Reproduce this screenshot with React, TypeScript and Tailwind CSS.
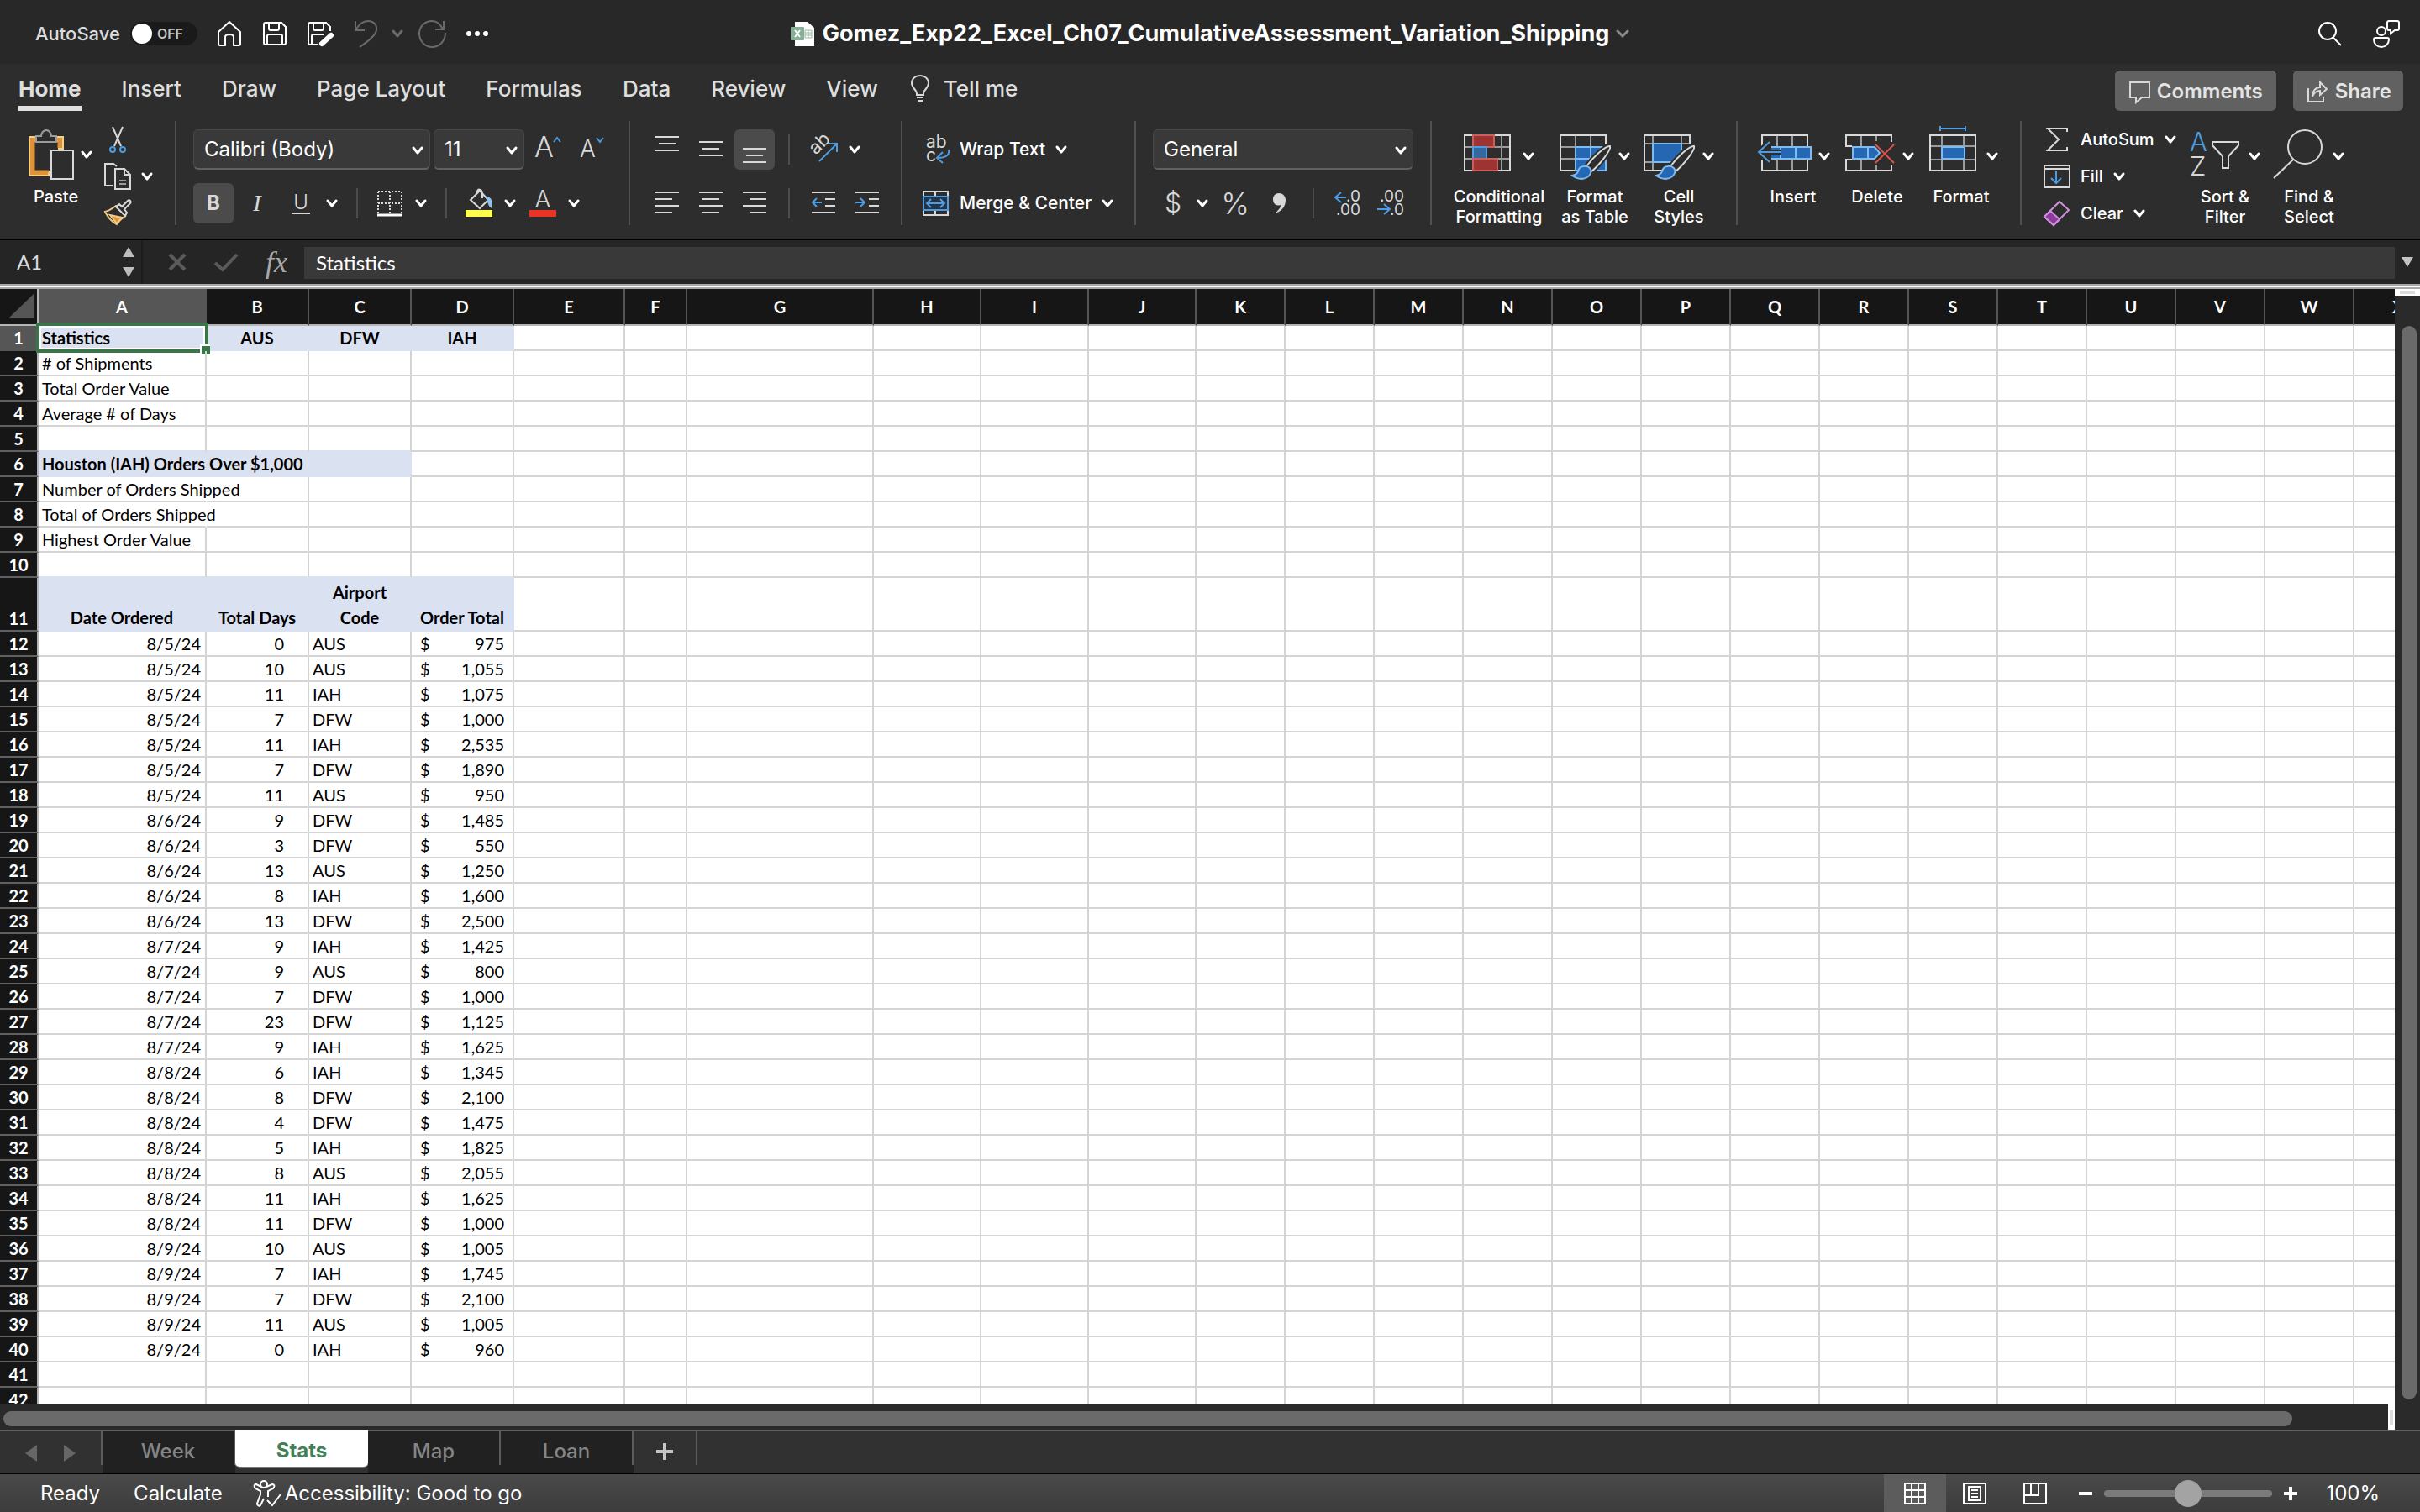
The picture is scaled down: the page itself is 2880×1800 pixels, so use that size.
import { useState } from 'react'
import type { ReactNode } from 'react'

const menuTabs = ['Home', 'Insert', 'Draw', 'Page Layout', 'Formulas', 'Data', 'Review', 'View']
const sheetTabs = ['Week', 'Stats', 'Map', 'Loan']

const rowHeaderWidth = 46

const columns = [
  { name: 'A', width: 200 },
  { name: 'B', width: 122 },
  { name: 'C', width: 122 },
  { name: 'D', width: 122 },
  { name: 'E', width: 132 },
  { name: 'F', width: 74 },
  { name: 'G', width: 222 },
  { name: 'H', width: 128 },
  { name: 'I', width: 128 },
  { name: 'J', width: 128 },
  ...'KLMNOPQRSTUVWX'.split('').map((name) => ({ name, width: 106 })),
]

const sheetWidth = columns.reduce((sum, c) => sum + c.width, rowHeaderWidth)

const orders: [string, number, string, string][] = [
  ['8/5/24', 0, 'AUS', '975'],
  ['8/5/24', 10, 'AUS', '1,055'],
  ['8/5/24', 11, 'IAH', '1,075'],
  ['8/5/24', 7, 'DFW', '1,000'],
  ['8/5/24', 11, 'IAH', '2,535'],
  ['8/5/24', 7, 'DFW', '1,890'],
  ['8/5/24', 11, 'AUS', '950'],
  ['8/6/24', 9, 'DFW', '1,485'],
  ['8/6/24', 3, 'DFW', '550'],
  ['8/6/24', 13, 'AUS', '1,250'],
  ['8/6/24', 8, 'IAH', '1,600'],
  ['8/6/24', 13, 'DFW', '2,500'],
  ['8/7/24', 9, 'IAH', '1,425'],
  ['8/7/24', 9, 'AUS', '800'],
  ['8/7/24', 7, 'DFW', '1,000'],
  ['8/7/24', 23, 'DFW', '1,125'],
  ['8/7/24', 9, 'IAH', '1,625'],
  ['8/8/24', 6, 'IAH', '1,345'],
  ['8/8/24', 8, 'DFW', '2,100'],
  ['8/8/24', 4, 'DFW', '1,475'],
  ['8/8/24', 5, 'IAH', '1,825'],
  ['8/8/24', 8, 'AUS', '2,055'],
  ['8/8/24', 11, 'IAH', '1,625'],
  ['8/8/24', 11, 'DFW', '1,000'],
  ['8/9/24', 10, 'AUS', '1,005'],
  ['8/9/24', 7, 'IAH', '1,745'],
  ['8/9/24', 7, 'DFW', '2,100'],
  ['8/9/24', 11, 'AUS', '1,005'],
  ['8/9/24', 0, 'IAH', '960'],
]

const labels: Record<number, string[]> = {
  1: ['Statistics', 'AUS', 'DFW', 'IAH'],
  2: ['# of Shipments'],
  3: ['Total Order Value'],
  4: ['Average # of Days'],
  6: ['Houston (IAH) Orders Over $1,000'],
  7: ['Number of Orders Shipped'],
  8: ['Total of Orders Shipped'],
  9: ['Highest Order Value'],
  11: ['Date Ordered', 'Total Days', 'Airport Code', 'Order Total'],
}

const rowCount = 42

function isFilled(row: number, col: number) {
  return ((row === 1 || row === 11) && col < 4) || (row === 6 && col < 3)
}

function Svg({ w, h, className = '', children }: { w: number; h: number; className?: string; children: ReactNode }) {
  return (
    <svg
      width={w}
      height={h}
      viewBox={`0 0 ${w} ${h}`}
      fill="none"
      stroke="#d8d8d8"
      strokeWidth={2}
      aria-hidden="true"
      className={`shrink-0 overflow-visible ${className}`}
    >
      {children}
    </svg>
  )
}

function Chevron({ className = '', color = '#ffffff' }: { className?: string; color?: string }) {
  return (
    <Svg w={14} h={10} className={className}>
      <path d="M2 2l5 6 5-6" stroke={color} strokeWidth={3} strokeLinecap="round" strokeLinejoin="round" />
    </Svg>
  )
}

function Lines({ rows }: { rows: [number, number, number][] }) {
  return (
    <Svg w={28} h={48}>
      {rows.map(([x1, x2, y]) => (
        <path key={y} d={`M${x1} ${y}H${x2}`} />
      ))}
    </Svg>
  )
}

function Tool({ label, active, children }: { label: string; active?: boolean; children: ReactNode }) {
  return (
    <button
      type="button"
      aria-label={label}
      className={`flex size-12 shrink-0 items-center justify-center rounded-md text-[#d8d8d8] ${active ? 'bg-[#4b4b4b]' : ''}`}
    >
      {children}
    </button>
  )
}

function Sep() {
  return <div className="h-9 w-0.5 shrink-0 bg-[#4c4c4c]" />
}

function Divider() {
  return <div className="w-0.5 shrink-0 self-stretch bg-[#505050]" />
}

function Dropdown({ label, value, className }: { label: string; value: string; className: string }) {
  return (
    <div className={`relative h-12 shrink-0 ${className}`}>
      <select
        aria-label={label}
        className="h-full w-full appearance-none rounded-md border border-b-2 border-[#484848] border-b-[#606060] bg-[#393939] pl-3 text-2xl text-white"
      >
        <option>{value}</option>
      </select>
      <Chevron className="pointer-events-none absolute top-5 right-2" />
    </div>
  )
}

function BigButton({ lines, icon, className = 'w-[100px]' }: { lines: string[]; icon: ReactNode; className?: string }) {
  return (
    <button type="button" className={`flex shrink-0 flex-col items-center gap-2 pt-2.5 ${className}`}>
      <span className="flex h-[60px] items-center gap-2.5">
        {icon}
        <Chevron className="mt-1" />
      </span>
      <span className="text-xl leading-6 font-medium text-white">
        {lines.map((line) => (
          <span key={line} className="block whitespace-nowrap">{line}</span>
        ))}
      </span>
    </button>
  )
}

function SmallButton({ label, icon }: { label: string; icon: ReactNode }) {
  return (
    <button type="button" className="flex h-8 items-center gap-3 text-xl font-medium whitespace-nowrap text-white">
      {icon}
      {label}
      <Chevron />
    </button>
  )
}

function PaintBrush() {
  return (
    <>
      <path d="M60 14C62 18 47 37 38 44L32 38C40 27 55 13 60 14Z" fill="#2d2d2d" stroke="#2d2d2d" strokeWidth={6} />
      <path d="M60 14C62 18 47 37 38 44L32 38C40 27 55 13 60 14Z" fill="#2d2d2d" />
      <path d="M29 38C35 37 39 42 37 46C34 54 23 55 15 49C19 48 21 47 22 44C23 40 26 38 29 38Z" fill="#2667b3" stroke="#7fbaf0" />
    </>
  )
}

function TitleBar() {
  const [autoSave, setAutoSave] = useState(false)

  return (
    <header className="grid h-[76px] shrink-0 grid-cols-[1fr_auto_1fr] items-center bg-[#282828] pt-1">
      <div className="flex items-center pl-[42px]">
        <label className="flex items-center gap-3 text-[22px] font-medium text-[#dcdcdc]">
          AutoSave
          <input
            type="checkbox"
            role="switch"
            checked={autoSave}
            onChange={(e) => setAutoSave(e.target.checked)}
            className="peer sr-only"
          />
          <span className="flex h-7 w-20 items-center gap-1.5 rounded-full bg-[#1a1a1a] pl-0.5 text-base font-semibold text-[#c4c4c4]">
            <span className="size-6 rounded-full bg-white" />
            {autoSave ? 'ON' : 'OFF'}
          </span>
        </label>
        <div className="ml-[22px] flex items-center gap-[22px]">
          <button type="button" aria-label="Home">
            <Svg w={32} h={32}>
              <path d="M3 14L16 2L29 14V28C29 29 28 30 27 30H21V20C21 18 19 17 16 17C13 17 11 18 11 20V30H5C4 30 3 29 3 28Z" stroke="#fff" strokeLinejoin="round" />
            </Svg>
          </button>
          <button type="button" aria-label="Save">
            <Svg w={32} h={32}>
              <path d="M5 3H24L29 8V27C29 28 28 29 27 29H5C4 29 3 28 3 27V5C3 4 4 3 5 3ZM9 3V10C9 11 10 12 11 12H19C20 12 21 11 21 10V3M7 29V19C7 18 8 17 9 17H23C24 17 25 18 25 19V29" stroke="#fff" />
            </Svg>
          </button>
          <button type="button" aria-label="Save As">
            <Svg w={32} h={32}>
              <path d="M14 29H4C3 29 2 28 2 27V5C2 4 3 3 4 3H23L28 8V13M8 3V10C8 11 9 12 10 12H18C19 12 20 11 20 10V3M6 29V19C6 18 7 17 8 17H20" stroke="#fff" />
              <path d="M29 18L18 28" stroke="#fff" strokeWidth={6} strokeLinecap="round" />
            </Svg>
          </button>
          <span className="flex items-center gap-[15px]">
            <button type="button" aria-label="Undo">
              <Svg w={32} h={32}>
                <path d="M4 1V12H15M4 12C8 5 13 1 19 1C26 1 30 6 29 12C28 18 18 26 9 32" stroke="#6a6a6a" />
              </Svg>
            </button>
            <Chevron color="#6a6a6a" />
          </span>
          <button type="button" aria-label="Redo" className="-ml-1">
            <Svg w={32} h={32}>
              <path d="M30 1V11H20M29 11C26 4 21 1 16 1C7 1 1 8 1 16C1 25 8 32 16 32C25 32 32 25 32 15" stroke="#6a6a6a" />
            </Svg>
          </button>
          <button type="button" aria-label="More commands">
            <Svg w={32} h={32}>
              <g fill="#fff" stroke="none">
                <circle cx={6} cy={16} r={3} />
                <circle cx={16} cy={16} r={3} />
                <circle cx={26} cy={16} r={3} />
              </g>
            </Svg>
          </button>
        </div>
      </div>
      <button type="button" className="flex items-center gap-2 text-[27px] font-bold whitespace-nowrap text-white">
        <Svg w={30} h={30}>
          <path d="M5 1H20L28 8V30H5Z" fill="#fff" stroke="none" />
          <path d="M17 11H25V20H17ZM21 11V20M17 14H25M17 17H25" stroke="#9db8a4" strokeWidth={1} />
          <rect x={0} y={7} width={16} height={16} rx={1} fill="#88b096" stroke="none" />
          <path d="M5 11L11 19M11 11L5 19" stroke="#fff" />
        </Svg>
        Gomez_Exp22_Excel_Ch07_CumulativeAssessment_Variation_Shipping
        <Svg w={16} h={10}>
          <path d="M2 2l6 6 6-6" stroke="#8a8a8a" strokeWidth={3} strokeLinecap="round" />
        </Svg>
      </button>
      <div className="flex items-center justify-end gap-9 pr-6">
        <button type="button" aria-label="Search">
          <Svg w={30} h={32}>
            <circle cx={12} cy={13} r={10} stroke="#fff" />
            <path d="M19 21L28 30" stroke="#fff" />
          </Svg>
        </button>
        <button type="button" aria-label="Presence">
          <Svg w={32} h={32}>
            <circle cx={10} cy={13} r={5} stroke="#fff" />
            <path d="M3 21H17C18 21 19 22 19 23C19 28 15 32 10 32C5 32 1 28 1 23C1 22 2 21 3 21Z" stroke="#fff" />
            <path d="M19 1H29C30 1 31 2 31 3V10C31 11 30 12 29 12H26L21 16V12H19C18 12 17 11 17 10V3C17 2 18 1 19 1Z" stroke="#fff" />
          </Svg>
        </button>
      </div>
    </header>
  )
}

function MenuTabs() {
  return (
    <nav className="flex h-16 shrink-0 items-start justify-between pt-2 pr-5 pl-[22px]">
      <div className="flex gap-12 text-[26px] font-medium text-[#dedede]">
        {menuTabs.map((tab) => (
          <button
            key={tab}
            type="button"
            className={`flex h-12 items-center border-b-[6px] whitespace-nowrap ${tab === 'Home' ? 'border-[#e0e0e0] font-bold' : 'border-transparent'}`}
          >
            {tab}
          </button>
        ))}
        <button type="button" className="-ml-2.5 flex h-12 items-center gap-4 border-b-[6px] border-transparent whitespace-nowrap">
          <Svg w={24} h={32}>
            <path d="M8 24V22C8 18 2 16 2 10C2 5 6 1 12 1C18 1 22 5 22 10C22 16 16 18 16 22V24ZM8 27H16M9 31H15" />
          </Svg>
          Tell me
        </button>
      </div>
      <div className="flex gap-5 text-2xl font-semibold text-[#e4e4e4]">
        <button type="button" className="flex h-12 items-center gap-2 rounded-md border-t border-[#757575] bg-[#616161] px-4">
          <Svg w={26} h={26}>
            <path d="M2 2H25V20H16L9 26V20H2Z" />
          </Svg>
          Comments
        </button>
        <button type="button" className="flex h-12 items-center gap-2 rounded-md border-t border-[#757575] bg-[#616161] px-3.5">
          <Svg w={28} h={26}>
            <path d="M4 9V25H22V19M9 19C9 12 13 8 18 8V2L26 10L18 17V12C14 12 11 14 9 19Z" />
          </Svg>
          Share
        </button>
      </div>
    </nav>
  )
}

function Ribbon() {
  return (
    <div className="flex h-36 shrink-0 pt-1 pb-4">
      {/* Clipboard */}
      <div className="flex w-52 shrink-0 gap-3.5 pl-[34px]">
        <button type="button" className="flex flex-col gap-2 pt-2.5">
          <span className="flex items-center gap-2">
            <Svg w={54} h={60}>
              <path d="M1 9H41V23H36V14H6V50H24V55H1Z" fill="#dd933a" stroke="#f5d28c" />
              <path d="M36 12V22M6 12V50H24" stroke="#dd933a" strokeWidth={3} />
              <path d="M9 15V8H15C15 4 18 1 21 1C24 1 27 4 27 8H33V15Z" fill="#2d2d2d" stroke="#9b9b9b" />
              <rect x={27} y={25} width={26} height={34} fill="#2d2d2d" />
            </Svg>
            <Chevron />
          </span>
          <span className="pl-1.5 text-left text-xl leading-6 font-medium text-white">Paste</span>
        </button>
        <div className="flex flex-col gap-3 pt-1.5">
          <button type="button" aria-label="Cut" className="size-8">
            <Svg w={32} h={32}>
              <path d="M10 1L20 24M22 1L12 24" />
              <circle cx={10} cy={28} r={3} stroke="#4f9ce0" />
              <circle cx={22} cy={28} r={3} stroke="#4f9ce0" />
            </Svg>
          </button>
          <button type="button" aria-label="Copy" className="flex items-center gap-3">
            <Svg w={32} h={32}>
              <path d="M10 27H1V1H11L15 4M13 7H24L31 14V31H13ZM24 7V14H31" />
              <path d="M18 21H26M18 25H26" stroke="#9b9b9b" />
            </Svg>
            <Chevron />
          </button>
          <button type="button" aria-label="Format Painter" className="size-8">
            <Svg w={32} h={32}>
              <path d="M1 14C6 13 10 10 14 7L25 19C21 22 17 26 15 29C9 26 4 20 1 14Z" stroke="#f0cb84" />
              <path d="M7 18L21 21L15 28Z" fill="#dd933a" stroke="#f0cb84" />
              <path d="M14 8L18 5L21 8L28 1C30 -1 33 2 31 4L24 11L27 15L25 19Z" fill="#2d2d2d" />
            </Svg>
          </button>
        </div>
      </div>
      <Divider />

      {/* Font */}
      <div className="flex w-[538px] shrink-0 flex-col gap-4 pt-2.5 pl-5">
        <div className="flex items-center">
          <Dropdown label="Font" value="Calibri (Body)" className="mr-1 w-[282px]" />
          <Dropdown label="Font size" value="11" className="mr-1 w-[108px]" />
          <Tool label="Increase font size">
            <Svg w={36} h={32}>
              <text x={2} y={25} fontSize={34} fontWeight={300} fill="#d8d8d8" stroke="none">A</text>
              <path d="M25 7L29 2L33 7" stroke="#4f9ce0" />
            </Svg>
          </Tool>
          <Tool label="Decrease font size">
            <Svg w={36} h={32}>
              <text x={8} y={25} fontSize={28} fontWeight={300} fill="#d8d8d8" stroke="none">A</text>
              <path d="M28 2L32 7L36 2" stroke="#4f9ce0" />
            </Svg>
          </Tool>
        </div>
        <div className="flex items-center">
          <div className="mr-1.5 flex gap-1 text-[28px]">
            <Tool label="Bold" active><b className="text-2xl font-bold">B</b></Tool>
            <Tool label="Italic"><i className="font-['Liberation_Serif',serif]">I</i></Tool>
            <Tool label="Underline"><span className="border-b-2 border-[#d8d8d8] px-0.5 text-2xl leading-6 font-light">U</span></Tool>
          </div>
          <Chevron className="mr-[22px]" />
          <Sep />
          <button type="button" aria-label="Borders" className="mx-[22px] flex items-center gap-3.5">
            <Svg w={32} h={32}>
              <path d="M2 2H30M2 16H30M2 2V28M16 2V28M30 2V28" strokeDasharray="2 2" />
              <path d="M1 30H31" stroke="#fff" strokeWidth={3} />
            </Svg>
            <Chevron />
          </button>
          <Sep />
          <button type="button" aria-label="Fill colour" className="ml-[22px] flex items-center gap-3.5">
            <Svg w={32} h={32}>
              <path d="M6 12L17 1L27 12L17 22ZM14 4C13 -2 20 -2 20 5V10" />
              <path d="M25 9C31 10 31 14 30 20C27 18 28 14 25 9Z" fill="#8fc3ee" stroke="#8fc3ee" />
              <rect x={0} y={24} width={32} height={8} fill="#ffff4d" stroke="none" />
            </Svg>
            <Chevron />
          </button>
          <button type="button" aria-label="Font colour" className="ml-4 flex items-center gap-3.5">
            <Svg w={32} h={32}>
              <text x={16} y={21} textAnchor="middle" fontSize={28} fontWeight={300} fill="#d8d8d8" stroke="none">A</text>
              <rect x={0} y={24} width={32} height={8} fill="#e93323" stroke="none" />
            </Svg>
            <Chevron />
          </button>
        </div>
      </div>
      <Divider />

      {/* Alignment */}
      <div className="flex w-[322px] shrink-0 flex-col gap-4 pt-2.5 pl-5">
        <div className="flex items-center">
          <div className="mr-4 flex gap-1">
            <Tool label="Top align"><Lines rows={[[0, 28, 9], [4, 24, 17], [0, 28, 25]]} /></Tool>
            <Tool label="Middle align"><Lines rows={[[0, 28, 15], [4, 24, 23], [0, 28, 31]]} /></Tool>
            <Tool label="Bottom align" active><Lines rows={[[0, 28, 23], [4, 24, 31], [0, 28, 39]]} /></Tool>
          </div>
          <Sep />
          <div className="ml-4 flex items-center gap-1.5">
            <Tool label="Orientation">
              <Svg w={32} h={32}>
                <text x={0} y={0} transform="translate(7 23) rotate(-45)" fontSize={22} fill="#d8d8d8" stroke="none">ab</text>
                <path d="M11 30L31 10M22 9H32V19" stroke="#4f9ce0" />
              </Svg>
            </Tool>
            <Chevron />
          </div>
        </div>
        <div className="flex items-center">
          <div className="mr-4 flex gap-1">
            <Tool label="Align left"><Lines rows={[[0, 28, 11], [0, 20, 19], [0, 28, 27], [0, 20, 35]]} /></Tool>
            <Tool label="Centre"><Lines rows={[[0, 28, 11], [4, 24, 19], [0, 28, 27], [4, 24, 35]]} /></Tool>
            <Tool label="Align right"><Lines rows={[[0, 28, 11], [8, 28, 19], [0, 28, 27], [8, 28, 35]]} /></Tool>
          </div>
          <Sep />
          <div className="ml-4 flex gap-1">
            <Tool label="Decrease indent">
              <Svg w={28} h={48}>
                <path d="M0 11H28M16 19H28M16 27H28M0 35H28" />
                <path d="M12 23H1M6 18L1 23L6 28" stroke="#4f9ce0" />
              </Svg>
            </Tool>
            <Tool label="Increase indent">
              <Svg w={28} h={48}>
                <path d="M0 11H28M16 19H28M16 27H28M0 35H28" />
                <path d="M0 23H11M6 18L11 23L6 28" stroke="#4f9ce0" />
              </Svg>
            </Tool>
          </div>
        </div>
      </div>
      <Divider />

      <div className="flex w-[276px] shrink-0 flex-col gap-4 pt-2.5 pl-6 text-[21px] font-medium text-white">
        <button type="button" className="flex h-12 items-center gap-3 whitespace-nowrap">
          <Svg w={32} h={32}>
            <text fontSize={21} fontWeight={400} fill="#d8d8d8" stroke="none">
              <tspan x={4} y={14}>ab</tspan>
              <tspan x={4} y={30}>c</tspan>
            </text>
            <path d="M31 16C32 22 29 26 17 26M24 19L17 26L24 32" stroke="#4f9ce0" />
          </Svg>
          Wrap Text
          <Chevron />
        </button>
        <button type="button" className="flex h-12 items-center gap-3 whitespace-nowrap">
          <Svg w={32} h={32}>
            <path d="M1 2H30V30H1ZM15 2V8M15 24V30" />
            <rect x={1} y={8} width={29} height={16} fill="#243447" stroke="#4f9ce0" />
            <path d="M6 16H25M10 11L5 16L10 21M21 11L26 16L21 21" stroke="#4f9ce0" />
          </Svg>
          Merge &amp; Center
          <Chevron />
        </button>
      </div>
      <Divider />

      {/* Number */}
      <div className="flex w-[350px] shrink-0 flex-col gap-4 pt-2.5 pl-5">
        <Dropdown label="Number format" value="General" className="w-[310px]" />
        <div className="flex items-center text-4xl font-light">
          <Tool label="Accounting format"><span className="text-[32px]">$</span></Tool>
          <Chevron className="mr-2 ml-1" />
          <div className="mr-4 flex gap-1">
            <Tool label="Percent style">%</Tool>
            <Tool label="Comma style">
              <Svg w={20} h={32}>
                <path d="M10 4C15 4 18 8 18 12C18 20 13 26 5 28C10 24 12 21 12 18C6 20 3 16 3 11C3 7 6 4 10 4Z" fill="#d8d8d8" stroke="none" />
              </Svg>
            </Tool>
          </div>
          <Sep />
          <div className="ml-4 flex gap-1">
            <Tool label="Increase decimal">
              <Svg w={32} h={32}>
                <text textAnchor="end" fontSize={19} fontWeight={400} fill="#d8d8d8" stroke="none">
                  <tspan x={31} y={14}>.0</tspan>
                  <tspan x={31} y={30}>.00</tspan>
                </text>
                <path d="M14 9H1M8 3L1 9L8 15" stroke="#4f9ce0" />
              </Svg>
            </Tool>
            <Tool label="Decrease decimal">
              <Svg w={32} h={32}>
                <text textAnchor="end" fontSize={19} fontWeight={400} fill="#d8d8d8" stroke="none">
                  <tspan x={31} y={14}>.00</tspan>
                  <tspan x={31} y={30}>.0</tspan>
                </text>
                <path d="M-1 23H13M7 17L14 23L7 29" stroke="#4f9ce0" />
              </Svg>
            </Tool>
          </div>
        </div>
      </div>
      <Divider />

      {/* Styles */}
      <div className="flex w-[362px] shrink-0 items-start pl-6">
        <BigButton
          lines={['Conditional', 'Formatting']}
          className="mr-2 w-28"
          icon={
            <Svg w={60} h={48}>
              <path d="M1 15H55M1 29H55M11 1V43M45 1V43" stroke="#9b9b9b" />
              <rect x={1} y={1} width={54} height={42} />
              <rect x={11} y={1} width={25} height={14} fill="#9c3431" stroke="#c9605c" />
              <rect x={11} y={15} width={16} height={14} fill="#35689c" stroke="#4f9ce0" />
              <rect x={11} y={29} width={29} height={14} fill="#9c3431" stroke="#c9605c" />
            </Svg>
          }
        />
        <BigButton
          lines={['Format', 'as Table']}
          icon={
            <Svg w={60} h={48}>
              <path d="M1 15H55M1 29H19M19 1V43M37 1V15" stroke="#9b9b9b" />
              <path d="M55 12V1H1V43H19" />
              <path d="M19 15H55V43H19ZM19 29H55M37 15V43" fill="#2667b3" stroke="#7fbaf0" />
              <PaintBrush />
            </Svg>
          }
        />
        <BigButton
          lines={['Cell', 'Styles']}
          icon={
            <Svg w={60} h={48}>
              <path d="M1 11H55M1 33H30M11 1V43M45 1V11" stroke="#9b9b9b" />
              <path d="M55 12V1H1V43H22" />
              <rect x={11} y={11} width={34} height={22} fill="#2667b3" stroke="#7fbaf0" />
              <PaintBrush />
            </Svg>
          }
        />
      </div>
      <Divider />

      {/* Cells */}
      <div className="flex w-[336px] shrink-0 items-start pl-4">
        <BigButton
          lines={['Insert']}
          icon={
            <Svg w={64} h={60}>
              <path d="M25 7V20M43 7V20M25 36V49M43 36V49" stroke="#9b9b9b" />
              <path d="M7 20V7H61V20M7 36V49H61V36" />
              <path d="M18 21H65V35H18" fill="#2667b3" stroke="#7fbaf0" />
              <path d="M29 21V35M47 21V35" stroke="#7fbaf0" />
              <path d="M16 14L3 27L16 40M3 27H29" stroke="#2d2d2d" strokeWidth={6} />
              <path d="M16 15L3 27L16 39M3 27H29" stroke="#4f9ce0" />
            </Svg>
          }
        />
        <BigButton
          lines={['Delete']}
          icon={
            <Svg w={64} h={60}>
              <path d="M25 7V20M43 7V14M25 36V49M43 42V49" stroke="#9b9b9b" />
              <path d="M14 20H7V7H61V15M14 36H7V49H61V42" />
              <path d="M15 21H41L47 28L41 35H15Z" fill="#2667b3" stroke="#7fbaf0" />
              <path d="M33 21V35" stroke="#7fbaf0" />
              <path d="M42 18L64 40M64 18L42 40" stroke="#d9534c" />
            </Svg>
          }
        />
        <BigButton
          lines={['Format']}
          icon={
            <Svg w={64} h={60}>
              <path d="M7 20H61M7 36H61M21 7V49M47 7V49" stroke="#9b9b9b" />
              <rect x={7} y={7} width={54} height={42} />
              <rect x={21} y={21} width={27} height={14} fill="#2667b3" stroke="#7fbaf0" />
              <path d="M19 -1H49M19 -4V2M49 -4V2" stroke="#4f9ce0" />
            </Svg>
          }
        />
      </div>
      <Divider />

      {/* Editing */}
      <div className="flex shrink-0 items-start pl-[26px]">
        <div className="flex w-[166px] flex-col gap-3 pt-1.5">
          <SmallButton
            label="AutoSum"
            icon={
              <Svg w={32} h={32}>
                <path d="M28 7V3H5L18 16L5 29H28V25" />
              </Svg>
            }
          />
          <SmallButton
            label="Fill"
            icon={
              <Svg w={32} h={32}>
                <path d="M1 3H31V29H1ZM1 7H31" />
                <path d="M15 10V24M9 18L15 24L21 18" stroke="#4f9ce0" />
              </Svg>
            }
          />
          <SmallButton
            label="Clear"
            icon={
              <Svg w={32} h={32}>
                <path d="M19 2L30 12L12 30L1 20Z" stroke="#cf8fdc" />
                <path d="M8 13L19 23L12 30L1 20Z" fill="#8b3a9e" stroke="#cf8fdc" />
              </Svg>
            }
          />
        </div>
        <BigButton
          lines={['Sort &', 'Filter']}
          icon={
            <Svg w={60} h={60}>
              <text fontSize={31} fontWeight={300} stroke="none">
                <tspan x={0} y={26} fill="#4f9ce0">A</tspan>
                <tspan x={0} y={55} fill="#d8d8d8">Z</tspan>
              </text>
              <path d="M27 15H58V19L46 32V46H39V32L27 19Z" />
            </Svg>
          }
        />
        <BigButton
          lines={['Find &', 'Select']}
          icon={
            <Svg w={60} h={60}>
              <circle cx={37} cy={21} r={20} />
              <path d="M23 36L0 58" />
            </Svg>
          }
        />
      </div>
    </div>
  )
}

function FormulaBar() {
  return (
    <div className="flex h-[54px] shrink-0 items-stretch border-t-2 border-black bg-[#252525] text-[#dcdcdc]">
      <div className="flex w-[170px] items-center justify-between border-r-2 border-[#1c1c1c] pr-2 pl-5">
        <input
          aria-label="Name box"
          defaultValue="A1"
          className="w-24 bg-transparent font-['Lato',sans-serif] text-2xl outline-none"
        />
        <Svg w={14} h={36}>
          <path d="M0 12L7 0L14 12ZM0 24L7 36L14 24Z" fill="#bdbdbd" stroke="none" />
        </Svg>
      </div>
      <div className="flex w-48 items-center pl-[30px]">
        <button type="button" aria-label="Cancel">
          <Svg w={22} h={22}>
            <path d="M2 2L20 20M20 2L2 20" stroke="#5a5a5a" strokeWidth={4} />
          </Svg>
        </button>
        <button type="button" aria-label="Enter" className="ml-8">
          <Svg w={30} h={22}>
            <path d="M2 12L11 20L28 2" stroke="#5a5a5a" strokeWidth={4} />
          </Svg>
        </button>
        <button type="button" aria-label="Insert function" className="ml-8 font-['Liberation_Serif',serif] text-4xl leading-none text-[#a8a8a8] italic">
          fx
        </button>
      </div>
      <input
        aria-label="Formula"
        defaultValue="Statistics"
        className="my-2 mb-1.5 min-w-0 flex-1 bg-[#393939] px-3.5 font-['Lato',sans-serif] text-2xl text-white outline-none"
      />
      <button type="button" aria-label="Expand formula bar" className="flex w-[30px] items-center justify-center">
        <Svg w={14} h={12}>
          <path d="M0 0H14L7 12Z" fill="#c4c4c4" stroke="none" />
        </Svg>
      </button>
    </div>
  )
}

function cellContent(row: number, col: number): ReactNode {
  if (labels[row]) return labels[row][col]
  const order = orders[row - 12]
  if (!order || col > 3) return null
  if (col === 3) {
    return (
      <span className="flex justify-between">
        <span>$</span>
        <span>{order[3]}</span>
      </span>
    )
  }
  return order[col]
}

function cellAlign(row: number, col: number) {
  if (row === 11) return 'text-center'
  if (row === 1 && col > 0) return 'text-center'
  if (row > 11 && col === 0) return 'text-right pr-[5px]'
  if (row > 11 && col === 1) return 'text-right pr-7'
  if (row > 11 && col === 3) return 'pl-2.5 pr-2.5'
  return 'pl-1'
}

function Cell({ row, col }: { row: number; col: number }) {
  const filled = isFilled(row, col)
  const spills = col === 0 && (row === 7 || row === 8)
  const right = filled ? 'border-r-[#dae1f1]' : spills ? 'border-r-transparent' : 'border-r-[#d4d4d4]'
  const bottom = filled || isFilled(row + 1, col) ? 'border-b-[#dae1f1]' : 'border-b-[#d4d4d4]'
  const wraps = row === 11 && col === 2

  return (
    <td
      className={`border-r-2 border-b-2 align-bottom ${col === 0 ? 'relative z-10' : ''} ${right} ${bottom} ${filled ? 'bg-[#dae1f1] font-bold' : ''} ${cellAlign(row, col)} ${wraps ? 'px-5' : 'whitespace-nowrap'} ${row === 11 ? 'leading-[30px]' : 'leading-7'}`}
    >
      {cellContent(row, col)}
      {row === 1 && col === 0 && (
        <span className="absolute -top-1 -right-1 -bottom-1 -left-[3px] border-4 border-[#3a7549]">
          <span className="absolute inset-0 border-2 border-white" />
          <span className="absolute -right-1.5 -bottom-1.5 size-3 border-t-2 border-l-2 border-white bg-[#3a7549]" />
        </span>
      )}
    </td>
  )
}

function Sheet() {
  return (
    <div className="flex min-h-0 flex-1">
      <div className="flex min-w-0 flex-1 flex-col">
        <div className="isolate min-h-0 flex-1 overflow-hidden bg-white">
          <table
            style={{ width: sheetWidth }}
            className="table-fixed border-separate border-spacing-0 font-['Lato',sans-serif] text-[20px] text-black"
          >
            <colgroup>
              <col style={{ width: rowHeaderWidth }} />
              {columns.map((c) => (
                <col key={c.name} style={{ width: c.width }} />
              ))}
            </colgroup>
            <thead>
              <tr className="h-11 bg-[#161616] text-white">
                <th aria-label="Select all" className="border-r-2 border-b-2 border-[#b5b5b5] p-0">
                  <Svg w={32} h={32} className="ml-2.5">
                    <path d="M30 1V30H0Z" fill="#555" stroke="none" />
                  </Svg>
                </th>
                {columns.map((c) => (
                  <th
                    key={c.name}
                    scope="col"
                    className={`border-r-2 border-b-2 border-b-[#b5b5b5] p-0 font-bold ${c.name === 'A' ? 'border-r-[#565656] bg-[#565656]' : 'border-r-[#555]'}`}
                  >
                    {c.name}
                  </th>
                ))}
              </tr>
            </thead>
            <tbody>
              {Array.from({ length: rowCount }, (_, i) => i + 1).map((row) => (
                <tr key={row} className={row === 11 ? 'h-16' : 'h-[30px]'}>
                  <th
                    scope="row"
                    className={`border-r-2 border-b-2 border-r-[#b5b5b5] p-0 align-bottom leading-7 font-bold text-white ${row === 1 ? 'border-b-[#565656] bg-[#565656]' : 'border-b-[#606060] bg-[#161616]'}`}
                  >
                    {row}
                  </th>
                  {columns.map((c, col) => (
                    <Cell key={c.name} row={row} col={col} />
                  ))}
                </tr>
              ))}
            </tbody>
          </table>
        </div>
        <div className="flex h-[30px] shrink-0 bg-[#2a2a2a]">
          <div className="flex flex-1 items-center pt-1 pl-1">
            <div className="h-[18px] w-[96%] rounded-full bg-[#6a6a6a]" />
          </div>
          <div className="flex w-2 items-center justify-center bg-white">
            <div className="h-[18px] w-1 bg-[#dcdcdc]" />
          </div>
        </div>
      </div>
      <div className="flex w-[30px] shrink-0 flex-col items-center bg-[#2a2a2a] pb-9">
        <div className="flex h-2 w-full items-center justify-center bg-white">
          <div className="h-1 w-[18px] bg-[#dcdcdc]" />
        </div>
        <div className="mt-9 ml-1 w-[18px] flex-1 rounded-full bg-[#6a6a6a]" />
      </div>
    </div>
  )
}

function SheetTabs() {
  const [active, setActive] = useState('Stats')

  return (
    <div className="flex h-[52px] shrink-0 items-start border-t-2 border-[#606060] bg-[#313131] text-2xl font-medium">
      <div className="flex h-10 w-[122px] items-end gap-8 border-r-2 border-[#5c5c5c] pb-1 pl-[30px]">
        <Svg w={14} h={20}>
          <path d="M14 0V20L0 10Z" fill="#666" stroke="none" />
        </Svg>
        <Svg w={14} h={20}>
          <path d="M0 0V20L14 10Z" fill="#666" stroke="none" />
        </Svg>
      </div>
      {sheetTabs.map((tab) => (
        <div key={tab} className={`h-full w-[158px] ${tab === active ? '' : 'bg-[#212121]'}`}>
          <button
            type="button"
            onClick={() => setActive(tab)}
            className={
              tab === active
                ? '-mt-0.5 h-[46px] w-full rounded-b-md border-b-2 border-[#777] bg-white pt-1.5 font-bold text-[#3f8055]'
                : 'h-10 w-full border-r-2 border-[#5c5c5c] pt-2 text-[#858585]'
            }
          >
            {tab}
          </button>
        </div>
      ))}
      <button type="button" aria-label="New sheet" className="flex h-10 w-[76px] items-center justify-center border-r-2 border-[#5c5c5c] pt-2">
        <Svg w={20} h={20}>
          <path d="M10 0V20M0 10H20" stroke="#c4c4c4" strokeWidth={4} />
        </Svg>
      </button>
    </div>
  )
}

function StatusBar() {
  return (
    <footer className="flex h-[46px] shrink-0 items-stretch justify-between border-t border-black bg-linear-to-b from-[#4a4a4a] to-[#3c3c3c] text-2xl text-white">
      <div className="flex items-center pl-12">
        <span className="mr-10">Ready</span>
        <span className="mr-9">Calculate</span>
        <button type="button" className="flex items-center gap-1">
          <Svg w={34} h={32}>
            <circle cx={13} cy={5} r={4} stroke="#fff" />
            <path d="M10 8L4 5C1 5 1 8 3 10L9 13V17L5 28C5 31 8 31 9 30L13 22M16 8L23 5C26 5 26 8 24 10L18 13V20M17 24L23 30L33 17" stroke="#fff" />
          </Svg>
          Accessibility: Good to go
        </button>
      </div>
      <div className="flex items-center pr-12">
        <button type="button" aria-label="Normal view" className="flex h-full w-[74px] items-center justify-center bg-[#5c5c5c]">
          <Svg w={26} h={26}>
            <path d="M1 1H25V25H1ZM9 1V25M17 1V25M1 9H25M1 17H25" stroke="#fff" />
          </Svg>
        </button>
        <button type="button" aria-label="Page layout view" className="ml-5">
          <Svg w={28} h={26}>
            <path d="M1 1H27V25H1ZM7 5H21V21H7ZM10 9H18M10 13H18M10 17H18" stroke="#fff" />
          </Svg>
        </button>
        <button type="button" aria-label="Page break preview" className="ml-11">
          <Svg w={28} h={26}>
            <path d="M1 1H27V25H1ZM1 15H18V1M9 1V15" stroke="#fff" />
          </Svg>
        </button>
        <button type="button" aria-label="Zoom out" className="ml-[38px]">
          <Svg w={16} h={16}>
            <path d="M0 8H16" stroke="#fff" strokeWidth={4} />
          </Svg>
        </button>
        <input
          type="range"
          aria-label="Zoom"
          min={0}
          max={100}
          defaultValue={50}
          className="mx-3.5 h-2 w-[200px] appearance-none rounded-full bg-[#7b7b7b] [&::-webkit-slider-thumb]:size-8 [&::-webkit-slider-thumb]:appearance-none [&::-webkit-slider-thumb]:rounded-full [&::-webkit-slider-thumb]:bg-[#a3a3a3]"
        />
        <button type="button" aria-label="Zoom in">
          <Svg w={16} h={16}>
            <path d="M8 0V16M0 8H16" stroke="#fff" strokeWidth={4} />
          </Svg>
        </button>
        <span className="ml-[34px]">100%</span>
      </div>
    </footer>
  )
}

export default function App() {
  return (
    <div className="flex h-screen w-full flex-col overflow-hidden bg-[#2d2d2d] font-['Inter',sans-serif]">
      <TitleBar />
      <MenuTabs />
      <Ribbon />
      <FormulaBar />
      <div className="h-1.5 shrink-0 border-y-2 border-[#a8a8a8] bg-white" />
      <Sheet />
      <SheetTabs />
      <StatusBar />
    </div>
  )
}
